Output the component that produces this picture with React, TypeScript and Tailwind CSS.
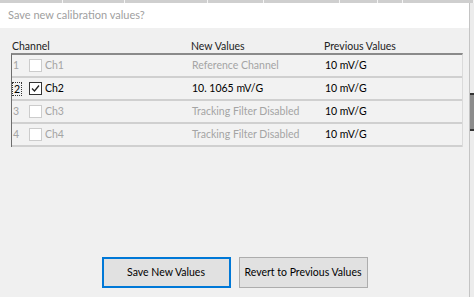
const rows = [
  { n: "1", name: "Ch1", value: "Reference Channel", prev: "10 mV/G", enabled: false },
  { n: "2", name: "Ch2", value: "10. 1065 mV/G", prev: "10 mV/G", enabled: true },
  { n: "3", name: "Ch3", value: "Tracking Filter Disabled", prev: "10 mV/G", enabled: false },
  { n: "4", name: "Ch4", value: "Tracking Filter Disabled", prev: "10 mV/G", enabled: false },
];

const ticks = [63, 62, 83, 56, 76, 38, 25, 71];

const App = () => {
  return (
    <div
      className="w-[474px] h-[297px] overflow-hidden flex flex-col bg-[#f0f0f0] text-[10.5px]"
      style={{ fontFamily: 'Lato, "Noto Sans", sans-serif' }}
    >
      {/* background app strip */}
      <div className="h-[3px] flex bg-[#cfcfcf]">
        {ticks.map((w, i) => (
          <div key={i} className="border-r border-[#f4f4f4] h-full" style={{ width: w }} />
        ))}
      </div>

      <div className="flex-1 flex">
        {/* dialog */}
        <div className="w-[470px] flex flex-col border-r border-[#c4c4c4]">
          <div className="h-[25px] bg-white flex items-center pl-[8px] text-[11px] text-[#a0a0a0]">
            Save new calibration values?
          </div>

          <div className="flex-1 flex flex-col px-[11px] pt-[11px] pb-[9px]">
            {/* header */}
            <div className="flex h-[14px] items-center leading-none text-[#222]">
              <span className="w-[180px] pl-[1px]">Channel</span>
              <span className="w-[133px]">New Values</span>
              <span>Previous Values</span>
            </div>

            {/* table */}
            <div className="w-[452px] border-t-2 border-l border-t-[#8a8a8a] border-l-[#6e6e6e] border-r border-r-[#dadada] bg-[#f2f2f2]">
              {rows.map((r) => (
                <div
                  key={r.n}
                  className="flex items-center h-[23px] border-b-2 border-[#d0d0d0]"
                >
                  <span className="w-[17px] flex">
                    <span
                      className={
                        r.enabled
                          ? "border border-dotted border-[#333] px-[1px] leading-[12px] text-black"
                          : "pl-[1px] text-[#a4a4a4]"
                      }
                    >
                      {r.n}
                    </span>
                  </span>
                  <span className="w-[16px] flex">
                    <span
                      className={
                        r.enabled
                          ? "w-[13px] h-[13px] border border-[#333] bg-white flex items-center justify-center"
                          : "w-[13px] h-[13px] border border-[#cccccc] bg-white"
                      }
                    >
                      {r.enabled && (
                        <svg width="9" height="9" viewBox="0 0 9 9">
                          <path d="M1 4.5 L3.5 7 L8 1.5" fill="none" stroke="#222" strokeWidth="1.3" />
                        </svg>
                      )}
                    </span>
                  </span>
                  <span className={"w-[147px] " + (r.enabled ? "text-black" : "text-[#a4a4a4]")}>
                    {r.name}
                  </span>
                  <span className={"w-[133px] " + (r.enabled ? "text-black" : "text-[#a4a4a4]")}>
                    {r.value}
                  </span>
                  <span className="text-black">{r.prev}</span>
                </div>
              ))}
            </div>

            <div className="flex-1" />

            {/* buttons */}
            <div className="flex justify-center gap-[8px]">
              <button className="w-[129px] h-[31px] bg-[#e1e1e1] border-2 border-[#0078d7] text-black">
                Save New Values
              </button>
              <button className="w-[129px] h-[31px] bg-[#e1e1e1] border border-[#adadad] text-black">
                Revert to Previous Values
              </button>
            </div>
          </div>
        </div>

        {/* background app right edge */}
        <div className="flex-1 flex flex-col bg-[#ececec]">
          <div className="h-[90px]" />
          <div className="h-[38px] border-y-2 border-[#333] bg-[#8c8c8c]" />
        </div>
      </div>
    </div>
  );
};

export default App;
